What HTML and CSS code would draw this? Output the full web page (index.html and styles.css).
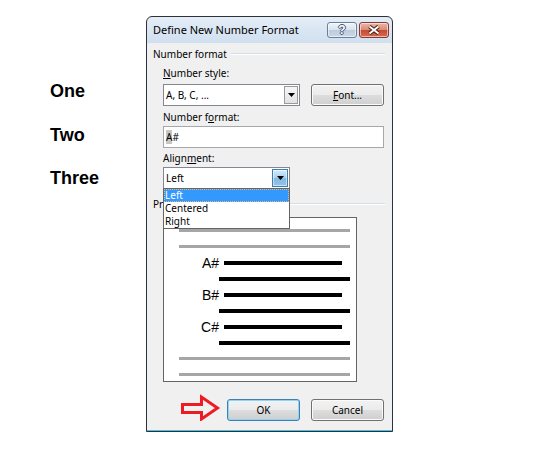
FILE: index.html
```html
<!DOCTYPE html>
<html>
<head>
<meta charset="utf-8">
<link rel="stylesheet" href="styles.css">
</head>
<body>
<div class="page">
  <div class="labels">
    <div class="big-label">One</div>
    <div class="big-label">Two</div>
    <div class="big-label">Three</div>
  </div>
  <div class="dialog">
    <div class="titlebar">
      <span class="title">Define New Number Format</span>
      <div class="tb-buttons">
        <div class="tb-btn help">?</div>
        <div class="tb-btn close">
          <svg width="14" height="10" viewBox="0 0 14 10">
            <path d="M2.5 1.5 L11.5 8.5 M11.5 1.5 L2.5 8.5" stroke="#4a1c14" stroke-width="4" fill="none"/>
            <path d="M2.5 1.5 L11.5 8.5 M11.5 1.5 L2.5 8.5" stroke="#ffffff" stroke-width="2" fill="none"/>
          </svg>
        </div>
      </div>
    </div>
    <div class="client">
      <div class="group-head"><span>Number format</span><div class="rule"></div></div>
      <div class="group-body">
        <div class="field-label lbl-style"><u>N</u>umber style:</div>
        <div class="row">
          <div class="combo combo-style">
            <span class="combo-text">A, B, C, ...</span>
            <div class="combo-btn">
              <svg width="7" height="4" viewBox="0 0 7 4"><polygon points="0,0 7,0 3.5,4" fill="#000"/></svg>
            </div>
          </div>
          <div class="btn btn-font"><u>F</u>ont...</div>
        </div>
        <div class="field-label lbl-format">Number f<u>o</u>rmat:</div>
        <div class="textbox"><span class="sel">A</span>#</div>
        <div class="field-label lbl-align">Align<u>m</u>ent:</div>
        <div class="combo-wrap">
          <div class="combo combo-align">
            <span class="combo-text">Left</span>
            <div class="combo-btn hot">
              <svg width="7" height="4" viewBox="0 0 7 4"><polygon points="0,0 7,0 3.5,4" fill="#000"/></svg>
            </div>
          </div>
          <div class="dropdown">
            <div class="item selected">Left</div>
            <div class="item">Centered</div>
            <div class="item">Right</div>
          </div>
        </div>
      </div>
      <div class="group-head preview-head"><span>Preview</span><div class="rule"></div></div>
      <div class="preview">
        <div class="pv-gray"></div>
        <div class="pv-gray"></div>
        <div class="pv-num"><span>A#</span><div class="bar"></div></div>
        <div class="pv-long"></div>
        <div class="pv-num"><span>B#</span><div class="bar"></div></div>
        <div class="pv-long"></div>
        <div class="pv-num"><span>C#</span><div class="bar"></div></div>
        <div class="pv-long"></div>
        <div class="pv-gray"></div>
        <div class="pv-gray"></div>
      </div>
      <div class="buttons">
        <svg class="arrow" width="40" height="27" viewBox="0 0 40 27">
          <polygon points="1.5,10.5 20.5,10.5 20.5,3 36.5,14 20.5,25 20.5,18.5 1.5,18.5" fill="none" stroke="#ed1c24" stroke-width="3"/>
        </svg>
        <div class="btn btn-ok">OK</div>
        <div class="btn btn-cancel">Cancel</div>
      </div>
    </div>
  </div>
</div>
</body>
</html>
```

FILE: styles.css
```css
html, body {
  margin: 0;
  padding: 0;
  background: #ffffff;
}
body {
  font-family: "Noto Sans", "Liberation Sans", sans-serif;
  color: #000;
}
.page {
  width: 534px;
  height: 457px;
  display: flex;
  align-items: flex-start;
}
.labels {
  width: 146px;
  flex: none;
  box-sizing: border-box;
  padding: 70px 0 0 50px;
  font-family: "Liberation Sans", Arial, sans-serif;
  font-weight: bold;
  font-size: 18px;
  line-height: 43.5px;
}
.dialog {
  margin-top: 16px;
  width: 247px;
  height: 416px;
  flex: none;
  box-sizing: border-box;
  border: 1px solid #2e3236;
  border-radius: 6px 6px 0 0;
  background: linear-gradient(to bottom, #e4edf7 0, #d0dfef 26px, #e9f1f9 27px, #e9f1f9 calc(100% - 1px), #44c2ea calc(100% - 1px));
  display: flex;
  flex-direction: column;
}
.titlebar {
  height: 26px;
  flex: none;
  display: flex;
  align-items: center;
  justify-content: space-between;
  padding: 0 3px 0 6px;
}
.title {
  font-size: 11px;
  line-height: 14px;
  color: #000;
}
.tb-buttons {
  display: flex;
  gap: 2px;
}
.tb-btn {
  width: 30px;
  height: 16px;
  box-sizing: border-box;
  border: 1px solid #6c7f98;
  border-radius: 3px;
  display: flex;
  align-items: center;
  justify-content: center;
  box-shadow: inset 0 0 0 1px rgba(255,255,255,0.55);
}
.help {
  background: linear-gradient(to bottom, #f0f4f9 0%, #d9e3ef 48%, #bccbde 52%, #cad8e8 100%);
  font-family: "Liberation Sans", Arial, sans-serif;
  font-weight: bold;
  font-size: 12px;
  line-height: 14px;
  color: #ffffff;
  text-shadow: -1px 0 #425471, 1px 0 #425471, 0 -1px #425471, 0 1px #425471;
}
.close {
  border-color: #8a3a2c;
  background: linear-gradient(to bottom, #ebb7aa 0%, #d88b78 48%, #c64a32 52%, #d46c52 100%);
}
.close svg {
  display: block;
}
.client {
  flex: 1;
  margin: 0 1px 1px;
  background: #f0f0f0;
  padding: 1px 6px 0 5px;
  font-size: 10px;
}
.group-head {
  height: 20px;
  line-height: 20px;
  display: flex;
  align-items: center;
  white-space: nowrap;
}
.group-head .rule {
  flex: 1;
  margin-left: 4px;
  height: 0;
  border-top: 1px solid #d5dfe5;
  border-bottom: 1px solid #ffffff;
}
.group-body {
  padding-left: 10px;
}
.field-label {
  height: 14px;
  line-height: 14px;
  white-space: nowrap;
}
.lbl-style { margin-top: 2px; }
.lbl-format { margin-top: 4px; }
.lbl-align { margin-top: 3px; }
.row {
  margin-top: 4px;
  display: flex;
  justify-content: space-between;
  padding-right: 1px;
}
.combo {
  height: 22px;
  box-sizing: border-box;
  border: 1px solid #828790;
  background: #ffffff;
  display: flex;
  align-items: center;
}
.combo-style { width: 137px; }
.combo-align { width: 127px; }
.combo-text {
  flex: 1;
  padding-left: 2px;
  line-height: 14px;
  white-space: nowrap;
}
.combo-btn {
  width: 14px;
  height: 18px;
  margin-right: 1px;
  box-sizing: border-box;
  border: 1px solid #9a9a9a;
  background: linear-gradient(to bottom, #f6f6f6, #e2e2e2);
  display: flex;
  align-items: center;
  justify-content: center;
}
.combo-btn.hot {
  width: 16px;
  border-color: #3c7fb1;
  background: linear-gradient(to bottom, #d6ebfa 0%, #a9d1f0 48%, #84b8e3 52%, #94c4ea 100%);
  box-shadow: inset 0 0 0 1px rgba(255,255,255,0.5);
}
.combo-btn svg {
  display: block;
}
.btn {
  width: 73px;
  height: 22px;
  box-sizing: border-box;
  border: 1px solid #707070;
  border-radius: 3px;
  background: linear-gradient(to bottom, #f2f2f2 0%, #ebebeb 50%, #dddddd 50%, #cfcfcf 100%);
  box-shadow: inset 0 0 0 1px #fbfbfb;
  display: flex;
  align-items: center;
  justify-content: center;
  line-height: 14px;
  white-space: nowrap;
}
.btn-ok {
  border-color: #3c7fb1;
  box-shadow: inset 0 0 0 1px #8fd6f5;
  margin-right: 11px;
}
.textbox {
  margin-top: 2px;
  height: 22px;
  box-sizing: border-box;
  border: 1px solid #a5a8ad;
  background: #ffffff;
  padding-left: 2px;
  display: flex;
  align-items: center;
  line-height: 14px;
  margin-right: 1px;
}
.textbox .sel {
  background: #c6c6c6;
}
.combo-wrap {
  margin-top: 2px;
  position: relative;
  width: 127px;
}
.dropdown {
  position: absolute;
  left: 0;
  top: calc(100% - 1px);
  width: 127px;
  box-sizing: border-box;
  border: 1px solid #646464;
  background: #ffffff;
  z-index: 2;
}
.item {
  height: 13px;
  line-height: 13px;
  padding-left: 1px;
  box-sizing: border-box;
}
.item.selected {
  background: #3399ff;
  color: #ffffff;
  border: 1px dotted #e6b878;
  line-height: 11px;
  padding-left: 0;
}
.preview-head {
  margin-top: 5px;
}
.preview {
  margin: 3px 0 0 10px;
  width: 194px;
  height: 165px;
  box-sizing: border-box;
  border: 1px solid #646464;
  background: #ffffff;
  padding-top: 11px;
  display: flex;
  flex-direction: column;
  gap: 12px;
}
.pv-gray {
  margin-left: 15px;
  width: 171px;
  height: 3px;
  margin-bottom: 1px;
  background: #a6a6a6;
  flex: none;
}
.pv-num {
  display: flex;
  align-items: center;
  height: 4px;
  flex: none;
}
.pv-num span {
  width: 60px;
  box-sizing: border-box;
  padding-right: 5px;
  text-align: right;
  font-family: "Liberation Sans", Arial, sans-serif;
  font-size: 14px;
  line-height: 4px;
}
.pv-num .bar {
  width: 118px;
  height: 4px;
  background: #000000;
}
.pv-long {
  margin-left: 55px;
  width: 131px;
  height: 4px;
  background: #000000;
  flex: none;
}
.buttons {
  margin-top: 12px;
  display: flex;
  justify-content: flex-end;
  align-items: flex-end;
  padding-right: 1px;
}
.arrow {
  display: block;
  margin-right: 6px;
}
```
